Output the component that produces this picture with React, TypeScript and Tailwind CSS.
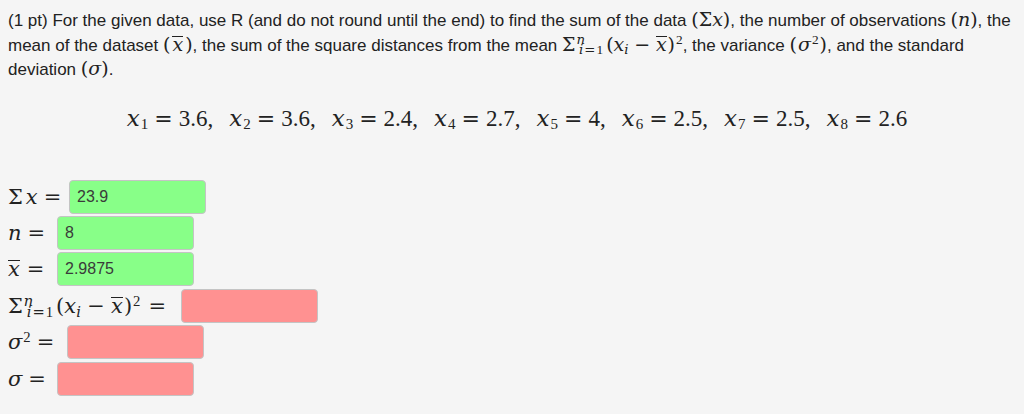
import React from 'react';

// fonts for the math: DejaVu for letters/operators, Liberation for digits
const dv = "font-['DejaVu_Serif',_serif]";
const lib = "font-['Liberation_Serif',_serif]";

const V: React.FC<{ children: React.ReactNode; bar?: boolean; className?: string }> = ({ children, bar, className = '' }) =>
  bar ? (
    <span className={`${dv} italic inline-block border-t border-current leading-[0.6] pt-[2px] ${className}`}>{children}</span>
  ) : (
    <span className={`${dv} italic ${className}`}>{children}</span>
  );

const Num: React.FC<{ children: React.ReactNode; className?: string }> = ({ children, className = '' }) => (
  <span className={`${lib} not-italic ${className}`}>{children}</span>
);

const Op: React.FC<{ children: React.ReactNode; className?: string }> = ({ children, className = '' }) => (
  <span className={`${dv} not-italic ${className}`}>{children}</span>
);

// Σ_{i=1}^{n} (x_i − x̄)^2
const SqDist: React.FC = () => (
  <span className="whitespace-nowrap">
    <Op>Σ</Op>
    <sup className="text-[0.7em] ml-[1px]">
      <V>n</V>
    </sup>
    <sub className="text-[0.7em] -ml-[0.45em]">
      <V>i</V>
      <Op className="mx-[1px]">=</Op>
      <Num>1</Num>
    </sub>
    <Op className="ml-[3px]">(</Op>
    <V>x</V>
    <sub className="text-[0.7em]">
      <V>i</V>
    </sub>
    <Op className="mx-[0.3em]">−</Op>
    <V bar>x</V>
    <Op className="ml-[1px]">)</Op>
    <sup className="text-[0.7em] ml-[1px]">
      <Num>2</Num>
    </sup>
  </span>
);

const data = ['3.6', '3.6', '2.4', '2.7', '4', '2.5', '2.5', '2.6'];

interface RowProps {
  label: React.ReactNode;
  labelW: string;
  value?: string;
  ok: boolean;
}

const AnswerRow: React.FC<RowProps> = ({ label, labelW, value, ok }) => (
  <div className="flex items-center h-[36.4px]">
    <div className={`${labelW} shrink-0 text-[21px] text-[#222] whitespace-nowrap leading-none`}>{label}</div>
    <div
      className={`w-[137px] h-[34px] rounded-[4px] border border-[#c4c4c4] flex items-center px-[7px] text-[16px] text-[#3a3a3a] font-['Liberation_Sans',_Arial,_sans-serif] ${
        ok ? 'bg-[#88ff88]' : 'bg-[#ff9191]'
      }`}
    >
      {value}
    </div>
  </div>
);

export default function App() {
  return (
    <div className="w-[1024px] h-[414px] bg-[#f5f5f5] px-2 pt-[9px] overflow-hidden">
      {/* Question */}
      <p className="font-['Liberation_Sans',_Arial,_sans-serif] text-[17px] leading-[24.5px] text-[#222]">
        (1 pt) For the given data, use R (and do not round until the end) to find the sum of the data{' '}
        <span className="text-[19px] leading-none">
          <Op>(Σ</Op>
          <V>x</V>
          <Op>)</Op>
        </span>
        , the number of observations{' '}
        <span className="text-[19px] leading-none">
          <Op>(</Op>
          <V>n</V>
          <Op>)</Op>
        </span>
        , the mean of the dataset{' '}
        <span className="text-[19px] leading-none">
          <Op>(</Op>
          <V bar className="mx-[2px]">
            x
          </V>
          <Op>)</Op>
        </span>
        , the sum of the square distances from the mean{' '}
        <span className="text-[19px] leading-none">
          <SqDist />
        </span>
        , the variance{' '}
        <span className="text-[19px] leading-none">
          <Op>(</Op>
          <V className="ml-[1px]">σ</V>
          <sup className="text-[0.7em] ml-[1px]">
            <Num>2</Num>
          </sup>
          <Op className="ml-[1px]">)</Op>
        </span>
        , and the standard deviation{' '}
        <span className="text-[19px] leading-none">
          <Op>(</Op>
          <V>σ</V>
          <Op>)</Op>
        </span>
        .
      </p>

      {/* Data */}
      <div className="text-center text-[22px] leading-[30px] text-[#222] mt-[19px] mb-[45px] pl-[10px]">
        {data.map((d, i) => (
          <span key={i} className={`whitespace-nowrap ${i < data.length - 1 ? 'mr-[16px]' : ''}`}>
            <V className="text-[23px]">x</V>
            <sub className="text-[15px] ml-[1px]">
              <Num>{i + 1}</Num>
            </sub>
            <Op className="mx-[6px]">=</Op>
            <Num className="text-[23px]">
              {d}
              {i < data.length - 1 && ','}
            </Num>
          </span>
        ))}
      </div>

      {/* Answers */}
      <div className="flex flex-col">
        <AnswerRow
          labelW="w-[61px]"
          label={
            <>
              <Op>Σ</Op>
              <V className="ml-[3px]">x</V>
              <Op className="ml-[6px]">=</Op>
            </>
          }
          value="23.9"
          ok
        />
        <AnswerRow
          labelW="w-[49px]"
          label={
            <>
              <V>n</V>
              <Op className="ml-[6px]">=</Op>
            </>
          }
          value="8"
          ok
        />
        <AnswerRow
          labelW="w-[49px]"
          label={
            <>
              <V bar>x</V>
              <Op className="ml-[7px]">=</Op>
            </>
          }
          value="2.9875"
          ok
        />
        <AnswerRow
          labelW="w-[173px]"
          label={
            <>
              <SqDist />
              <Op className="ml-[8px]">=</Op>
            </>
          }
          ok={false}
        />
        <AnswerRow
          labelW="w-[59px]"
          label={
            <>
              <V>σ</V>
              <sup className="text-[0.7em] ml-[1px]">
                <Num>2</Num>
              </sup>
              <Op className="ml-[6px]">=</Op>
            </>
          }
          ok={false}
        />
        <AnswerRow
          labelW="w-[49px]"
          label={
            <>
              <V>σ</V>
              <Op className="ml-[6px]">=</Op>
            </>
          }
          ok={false}
        />
      </div>
    </div>
  );
}
